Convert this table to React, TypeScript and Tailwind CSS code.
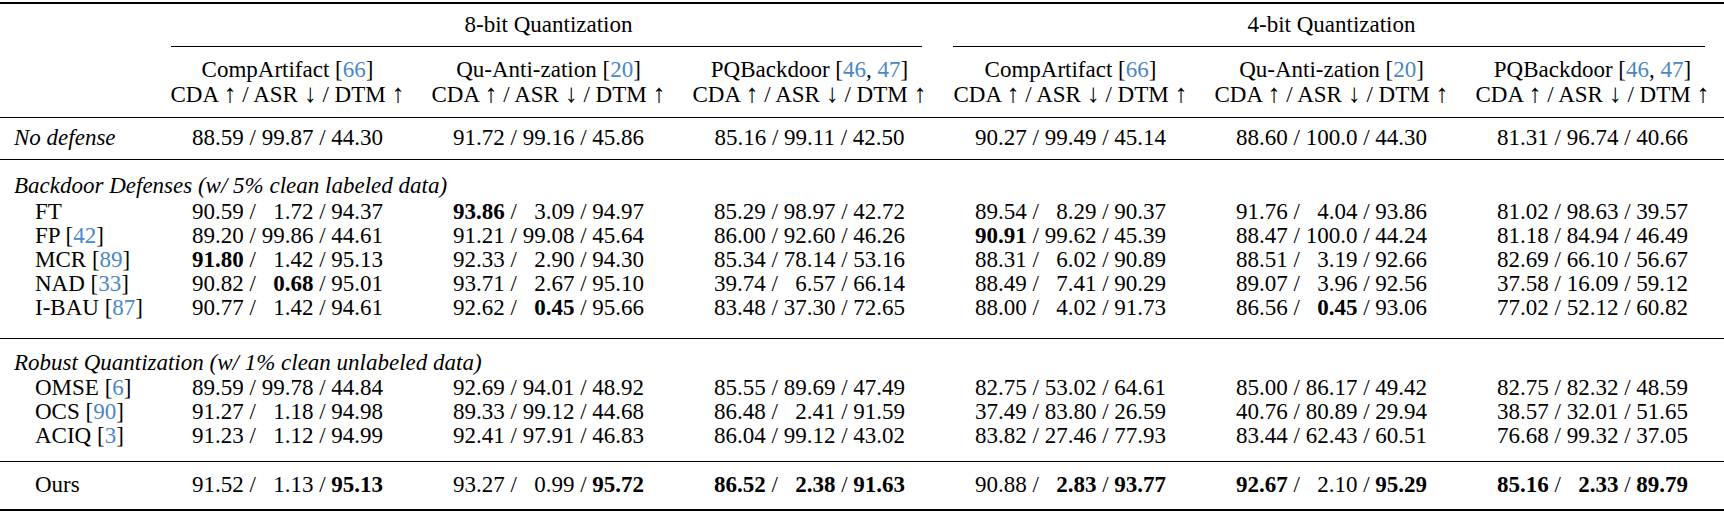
import React from "react";

const COLS = "grid grid-cols-[157px_repeat(6,261px)]";

type Row = { label: React.ReactNode; cells: string[][] };

function Ref({ ids }: { ids: string[] }) {
  return (
    <span>
      [
      {ids.map((id, i) => (
        <span key={id}>
          {i > 0 && ", "}
          <span className="text-[#4a86c8]">{id}</span>
        </span>
      ))}
      ]
    </span>
  );
}

// a leading "*" marks a bold value
function Num({ s }: { s: string }) {
  const bold = s.startsWith("*");
  const v = bold ? s.slice(1) : s;
  return (
    <span className={bold ? "font-bold" : ""}>
      {v.length < 5 && <span className="invisible">0</span>}
      {v}
    </span>
  );
}

function Triple({ vals }: { vals: string[] }) {
  return (
    <div className="text-center whitespace-nowrap">
      <Num s={vals[0]} />
      {" / "}
      <Num s={vals[1]} />
      {" / "}
      <Num s={vals[2]} />
    </div>
  );
}

function Arrow({ up }: { up?: boolean }) {
  return <span className="text-[26px] leading-none">{up ? "↑" : "↓"}</span>;
}

const methods: React.ReactNode[] = [
  <>
    CompArtifact <Ref ids={["66"]} />
  </>,
  <>
    Qu-Anti-zation <Ref ids={["20"]} />
  </>,
  <>
    PQBackdoor <Ref ids={["46", "47"]} />
  </>,
];

const backdoor: Row[] = [
  {
    label: "FT",
    cells: [
      ["90.59", "1.72", "94.37"],
      ["*93.86", "3.09", "94.97"],
      ["85.29", "98.97", "42.72"],
      ["89.54", "8.29", "90.37"],
      ["91.76", "4.04", "93.86"],
      ["81.02", "98.63", "39.57"],
    ],
  },
  {
    label: (
      <>
        FP <Ref ids={["42"]} />
      </>
    ),
    cells: [
      ["89.20", "99.86", "44.61"],
      ["91.21", "99.08", "45.64"],
      ["86.00", "92.60", "46.26"],
      ["*90.91", "99.62", "45.39"],
      ["88.47", "100.0", "44.24"],
      ["81.18", "84.94", "46.49"],
    ],
  },
  {
    label: (
      <>
        MCR <Ref ids={["89"]} />
      </>
    ),
    cells: [
      ["*91.80", "1.42", "95.13"],
      ["92.33", "2.90", "94.30"],
      ["85.34", "78.14", "53.16"],
      ["88.31", "6.02", "90.89"],
      ["88.51", "3.19", "92.66"],
      ["82.69", "66.10", "56.67"],
    ],
  },
  {
    label: (
      <>
        NAD <Ref ids={["33"]} />
      </>
    ),
    cells: [
      ["90.82", "*0.68", "95.01"],
      ["93.71", "2.67", "95.10"],
      ["39.74", "6.57", "66.14"],
      ["88.49", "7.41", "90.29"],
      ["89.07", "3.96", "92.56"],
      ["37.58", "16.09", "59.12"],
    ],
  },
  {
    label: (
      <>
        I-BAU <Ref ids={["87"]} />
      </>
    ),
    cells: [
      ["90.77", "1.42", "94.61"],
      ["92.62", "*0.45", "95.66"],
      ["83.48", "37.30", "72.65"],
      ["88.00", "4.02", "91.73"],
      ["86.56", "*0.45", "93.06"],
      ["77.02", "52.12", "60.82"],
    ],
  },
];

const robust: Row[] = [
  {
    label: (
      <>
        OMSE <Ref ids={["6"]} />
      </>
    ),
    cells: [
      ["89.59", "99.78", "44.84"],
      ["92.69", "94.01", "48.92"],
      ["85.55", "89.69", "47.49"],
      ["82.75", "53.02", "64.61"],
      ["85.00", "86.17", "49.42"],
      ["82.75", "82.32", "48.59"],
    ],
  },
  {
    label: (
      <>
        OCS <Ref ids={["90"]} />
      </>
    ),
    cells: [
      ["91.27", "1.18", "94.98"],
      ["89.33", "99.12", "44.68"],
      ["86.48", "2.41", "91.59"],
      ["37.49", "83.80", "26.59"],
      ["40.76", "80.89", "29.94"],
      ["38.57", "32.01", "51.65"],
    ],
  },
  {
    label: (
      <>
        ACIQ <Ref ids={["3"]} />
      </>
    ),
    cells: [
      ["91.23", "1.12", "94.99"],
      ["92.41", "97.91", "46.83"],
      ["86.04", "99.12", "43.02"],
      ["83.82", "27.46", "77.93"],
      ["83.44", "62.43", "60.51"],
      ["76.68", "99.32", "37.05"],
    ],
  },
];

const noDefense = [
  ["88.59", "99.87", "44.30"],
  ["91.72", "99.16", "45.86"],
  ["85.16", "99.11", "42.50"],
  ["90.27", "99.49", "45.14"],
  ["88.60", "100.0", "44.30"],
  ["81.31", "96.74", "40.66"],
];

const ours = [
  ["91.52", "1.13", "*95.13"],
  ["93.27", "0.99", "*95.72"],
  ["*86.52", "*2.38", "*91.63"],
  ["90.88", "*2.83", "*93.77"],
  ["*92.67", "2.10", "*95.29"],
  ["*85.16", "*2.33", "*89.79"],
];

function DataRow({ label, cells, h, indent }: { label: React.ReactNode; cells: string[][]; h: string; indent?: boolean }) {
  return (
    <div className={`${COLS} ${h} items-center`}>
      <div className={indent ? "pl-[35px] whitespace-nowrap" : "pl-[14px] whitespace-nowrap"}>{label}</div>
      {cells.map((c, i) => (
        <Triple key={i} vals={c} />
      ))}
    </div>
  );
}

function Rule() {
  return <div className="h-px bg-black" />;
}

export default function App() {
  return (
    <div className="w-[1724px] h-[513px] bg-white pt-[2px] text-[23px] text-black font-['Liberation_Serif',serif]">
      <div className="h-[2px] bg-black" />

      {/* quantization groups */}
      <div className={`${COLS} h-[42px] items-center`}>
        <div />
        <div className="col-span-3 text-center">8-bit Quantization</div>
        <div className="col-span-3 text-center">4-bit Quantization</div>
      </div>
      <div className={`${COLS} h-px`}>
        <div />
        <div className="col-span-3 ml-[14px] mr-[18px] bg-black" />
        <div className="col-span-3 ml-[13px] mr-[18px] bg-black" />
      </div>

      {/* attack names and metrics */}
      <div className={`${COLS} h-[34px] items-end leading-[22px]`}>
        <div />
        {[0, 1, 2, 0, 1, 2].map((m, i) => (
          <div key={i} className="text-center whitespace-nowrap">
            {methods[m]}
          </div>
        ))}
      </div>
      <div className={`${COLS} h-[22px] items-center leading-[22px]`}>
        <div />
        {[0, 1, 2, 3, 4, 5].map((i) => (
          <div key={i} className="text-center whitespace-nowrap">
            CDA <Arrow up /> / ASR <Arrow /> / DTM <Arrow up />
          </div>
        ))}
      </div>
      <div className="h-[14px]" />
      <Rule />

      <DataRow label={<i>No defense</i>} cells={noDefense} h="h-[41px]" />
      <Rule />

      <div className="h-[35px] flex items-end pl-[14px] leading-[18px] italic whitespace-nowrap">
        Backdoor Defenses (w/ 5% clean labeled data)
      </div>
      {backdoor.map((r, i) => (
        <DataRow key={i} label={r.label} cells={r.cells} h="h-[24px]" indent />
      ))}
      <div className="h-[23px]" />
      <Rule />

      <div className="h-[32px] flex items-end pl-[14px] leading-[16px] italic whitespace-nowrap">
        Robust Quantization (w/ 1% clean unlabeled data)
      </div>
      {robust.map((r, i) => (
        <DataRow key={i} label={r.label} cells={r.cells} h="h-[24px]" indent />
      ))}
      <div className="h-[18px]" />
      <Rule />

      <DataRow label="Ours" cells={ours} h="h-[47px]" indent />
      <div className="h-[2px] bg-black" />
    </div>
  );
}
